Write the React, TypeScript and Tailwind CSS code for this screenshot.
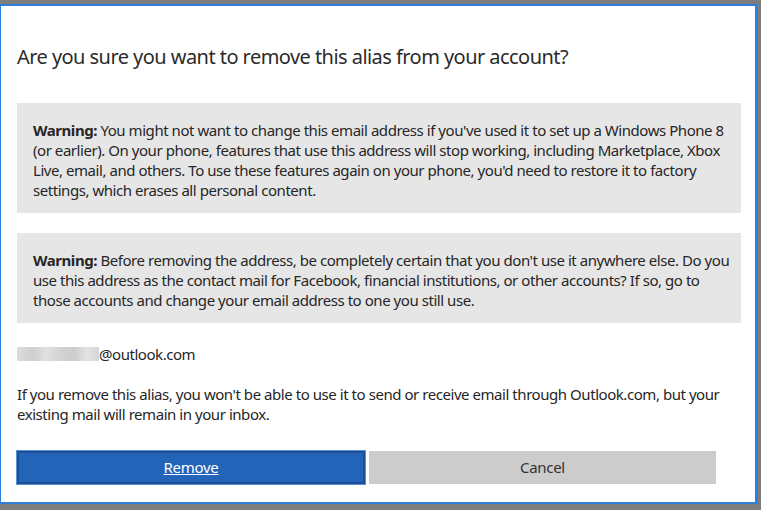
import React from "react";

export default function App() {
  return (
    <div className="w-[761px] h-[510px] bg-[#7d7d7d] pt-[4px] overflow-hidden" style={{ fontFamily: '"Noto Sans", "Open Sans", sans-serif' }}>
      <div className="w-[758px] h-[500px] bg-white border-l border-t-2 border-r-[3px] border-b-2 border-[#2f7fdc] pl-[16px] text-[#262626]">
        <h1 className="pt-[37px] text-[20px] leading-[28px] tracking-[-0.55px] text-[#2b2b2b] font-normal">
          Are you sure you want to remove this alias from your account?
        </h1>
        <div className="mt-[32px] w-[724px] bg-[#e6e6e6] pl-[16px] pr-[10px] pt-[17px] pb-[13px] text-[15px] leading-[20px] tracking-[-0.45px]">
          <b className="font-bold">Warning:</b> You might not want to change this email address if you've used it to set up a Windows Phone 8 (or earlier). On your phone, features that use this address will stop working, including Marketplace, Xbox Live, email, and others. To use these features again on your phone, you'd need to restore it to factory settings, which erases all personal content.
        </div>
        <div className="mt-[20px] w-[724px] bg-[#e6e6e6] pl-[16px] pr-[10px] pt-[17px] pb-[13px] text-[15px] leading-[20px] tracking-[-0.45px]">
          <b className="font-bold">Warning:</b> Before removing the address, be completely certain that you don't use it anywhere else. Do you use this address as the contact mail for Facebook, financial institutions, or other accounts? If so, go to those accounts and change your email address to one you still use.
        </div>
        <div className="mt-[21px] flex items-center text-[15px] leading-[20px] tracking-[-0.45px]">
          <span className="inline-block w-[82px] h-[14px] bg-[linear-gradient(90deg,#dcdcdc_0%,#cfcfcf_20%,#e0e0e0_35%,#d2d2d2_55%,#cdcdcd_70%,#e2e2e2_85%,#d6d6d6_100%)] blur-[0.5px]"></span>
          <span>@outlook.com</span>
        </div>
        <p className="mt-[20px] w-[724px] text-[15px] leading-[20px] tracking-[-0.45px]">
          If you remove this alias, you won't be able to use it to send or receive email through Outlook.com, but your existing mail will remain in your inbox.
        </p>
        <div className="mt-[27px] flex gap-[4px]">
          <button className="w-[348px] h-[33px] bg-[#2364b9] border-2 border-[#1d4f94] outline outline-1 outline-[#5b8fd6] text-white underline text-[15px] tracking-[-0.3px]">
            Remove
          </button>
          <button className="w-[347px] h-[33px] bg-[#cccccc] text-[#333] text-[15px] tracking-[-0.3px]">
            Cancel
          </button>
        </div>
      </div>
    </div>
  );
}
